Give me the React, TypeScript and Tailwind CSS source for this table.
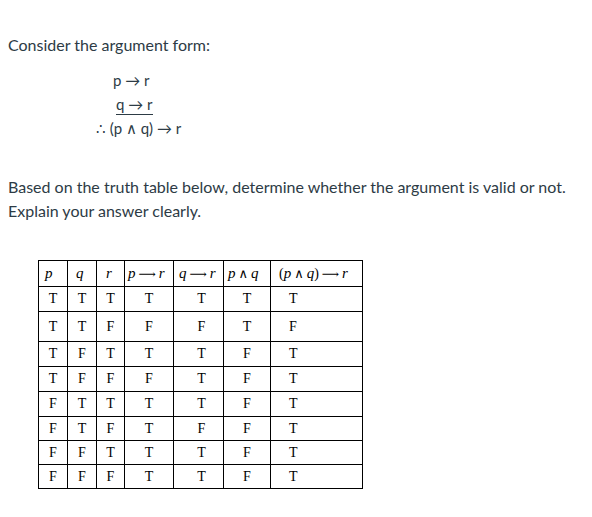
const rows = [
	["T", "T", "T", "T", "T", "T", "T"],
	["T", "T", "F", "F", "F", "T", "F"],
	["T", "F", "T", "T", "T", "F", "T"],
	["T", "F", "F", "F", "T", "F", "T"],
	["F", "T", "T", "T", "T", "F", "T"],
	["F", "T", "F", "T", "F", "F", "T"],
	["F", "F", "T", "T", "T", "F", "T"],
	["F", "F", "F", "T", "T", "F", "T"],
]

const rowHeights = ["h-[25px]", "h-[30px]", "h-[25px]", "h-[25px]", "h-[25px]", "h-[24px]", "h-[24px]", "h-[24px]"]

const widths = ["w-[29px]", "w-[29px]", "w-[28px]", "w-[49px]", "w-[50px]", "w-[47px]", "w-[92px]"]

const cellAlign = [
	"text-center",
	"text-center",
	"text-center",
	"text-center",
	"text-center pl-[6px]",
	"text-center",
	"text-left pl-[18px]",
]

const V = ({ children }: { children: React.ReactNode }) => <i className="text-[15px]">{children}</i>
const Arrow = () => <span className="font-['DejaVu_Serif',serif] text-[12px] mx-[3px]">⟶</span>
const And = () => <span className="font-['DejaVu_Serif',serif] text-[13px] mx-[3px]">∧</span>

const App = () => {
	return (
		<div className="w-[592px] h-[517px] bg-white pl-2 font-['Lato',sans-serif] text-[16px] leading-6 text-[#2d3b45]">
			<p className="pt-[33px]">Consider the argument form:</p>
			<div className="mt-[11px] text-[15px]">
				<p className="ml-[105px]">p → r</p>
				<p className="ml-[108px]">
					<span className="border-b border-[#2d3b45] pb-[1px]">q → r</span>
				</p>
				<p className="ml-[88px]">∴ (p ∧ q) → r</p>
			</div>
			<p className="mt-[35px]">Based on the truth table below, determine whether the argument is valid or not.</p>
			<p>Explain your answer clearly.</p>
			<table className="mt-[37px] ml-[30px] border-collapse border border-black font-['Liberation_Serif',serif] text-[14px] leading-none text-black">
				<thead>
					<tr className="h-[26px]">
						<th className={`${widths[0]} border border-black font-normal text-left pl-[6px]`}><V>p</V></th>
						<th className={`${widths[1]} border border-black font-normal text-left pl-[8px]`}><V>q</V></th>
						<th className={`${widths[2]} border border-black font-normal text-left pl-[9px]`}><V>r</V></th>
						<th className={`${widths[3]} border border-black font-normal text-left pl-[3px] whitespace-nowrap`}><V>p</V><Arrow /><V>r</V></th>
						<th className={`${widths[4]} border border-black font-normal text-left pl-[5px] whitespace-nowrap`}><V>q</V><Arrow /><V>r</V></th>
						<th className={`${widths[5]} border border-black font-normal text-left pl-[4px] whitespace-nowrap`}><V>p</V><And /><V>q</V></th>
						<th className={`${widths[6]} border border-black font-normal text-left pl-[8px] whitespace-nowrap`}>(<V>p</V><And /><V>q</V>)<Arrow /><V>r</V></th>
					</tr>
				</thead>
				<tbody>
					{rows.map((row, i) => (
						<tr key={i} className={rowHeights[i]}>
							{row.map((v, j) => (
								<td key={j} className={`border border-black ${cellAlign[j]}`}>{v}</td>
							))}
						</tr>
					))}
				</tbody>
			</table>
		</div>
	)
}

export default App
